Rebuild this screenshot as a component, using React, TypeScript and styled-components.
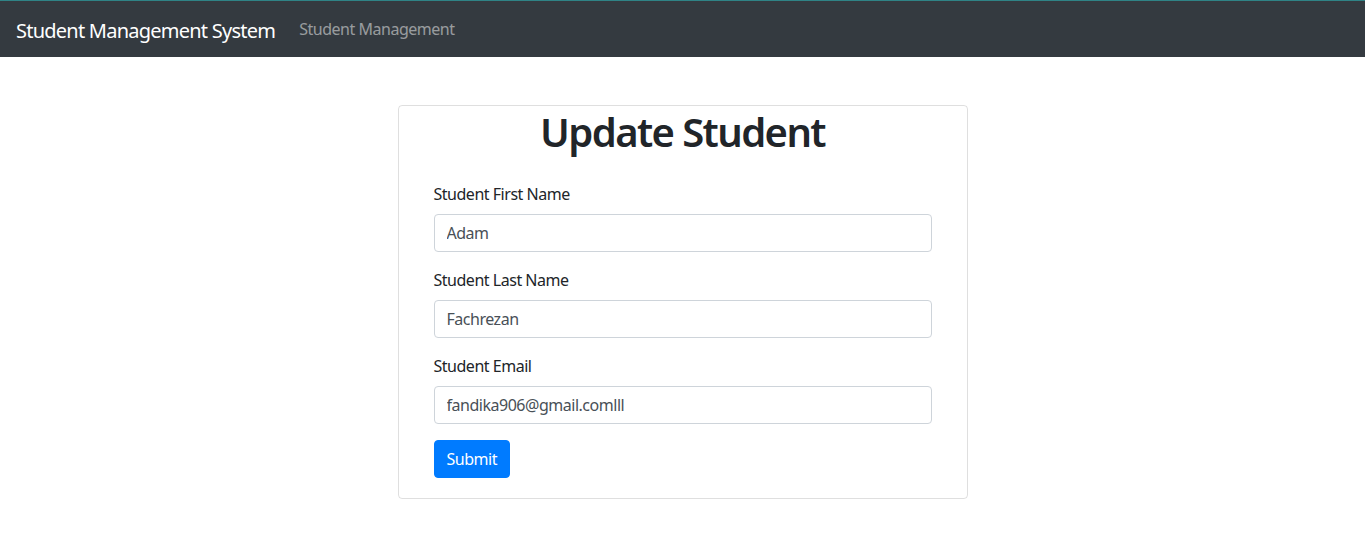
import styled, { createGlobalStyle } from "styled-components";

const GlobalStyle = createGlobalStyle`
  body {
    margin: 0;
    font-family: "Noto Sans", "Open Sans", sans-serif;
    font-size: 16px;
    line-height: 1.5;
    letter-spacing: -0.03em;
    color: #212529;
    background: #fff;
  }
  * { box-sizing: border-box; }
`;

const NavBar = styled.nav`
  display: flex;
  align-items: center;
  height: 57px;
  padding: 0 16px;
  background: #343a40;
  border-top: 1px solid #2f8386;
`;

const Brand = styled.a`
  margin: 4px 16px 0 0;
  font-size: 20px;
  line-height: 30px;
  letter-spacing: -0.038em;
  color: #fff;
  text-decoration: none;
`;

const NavLink = styled.a`
  padding: 0 8px;
  color: rgba(255, 255, 255, 0.5);
  text-decoration: none;
`;

const Card = styled.div`
  width: 570px;
  margin: 48px auto 0;
  padding: 0 15px;
  border: 1px solid rgba(0, 0, 0, 0.125);
  border-radius: 4px;
`;

const Title = styled.h1`
  margin: 2px 0 6px;
  font-size: 40px;
  font-weight: 600;
  line-height: 1.2;
  letter-spacing: -0.04em;
  text-align: center;
`;

const CardBody = styled.form`
  padding: 20px;
`;

const FormGroup = styled.div`
  margin-bottom: 16px;
`;

const Label = styled.label`
  display: block;
  margin-bottom: 8px;
`;

const Input = styled.input`
  display: block;
  width: 100%;
  height: 38px;
  padding: 6px 12px;
  font: inherit;
  letter-spacing: inherit;
  color: #495057;
  border: 1px solid #ced4da;
  border-radius: 4px;
  background: #fff;
`;

const Button = styled.button`
  height: 38px;
  padding: 6px 12px;
  font: inherit;
  letter-spacing: inherit;
  color: #fff;
  background: #007bff;
  border: 1px solid #007bff;
  border-radius: 4px;
`;

const fields = [
  { label: "Student First Name", value: "Adam" },
  { label: "Student Last Name", value: "Fachrezan" },
  { label: "Student Email", value: "fandika906@gmail.comlll" },
];

export default function App() {
  return (
    <>
      <GlobalStyle />
      <NavBar>
        <Brand href="#">Student Management System</Brand>
        <NavLink href="#">Student Management</NavLink>
      </NavBar>
      <Card>
        <Title>Update Student</Title>
        <CardBody onSubmit={(e) => e.preventDefault()}>
          {fields.map((f) => (
            <FormGroup key={f.label}>
              <Label>{f.label}</Label>
              <Input defaultValue={f.value} />
            </FormGroup>
          ))}
          <Button type="submit">Submit</Button>
        </CardBody>
      </Card>
    </>
  );
}
